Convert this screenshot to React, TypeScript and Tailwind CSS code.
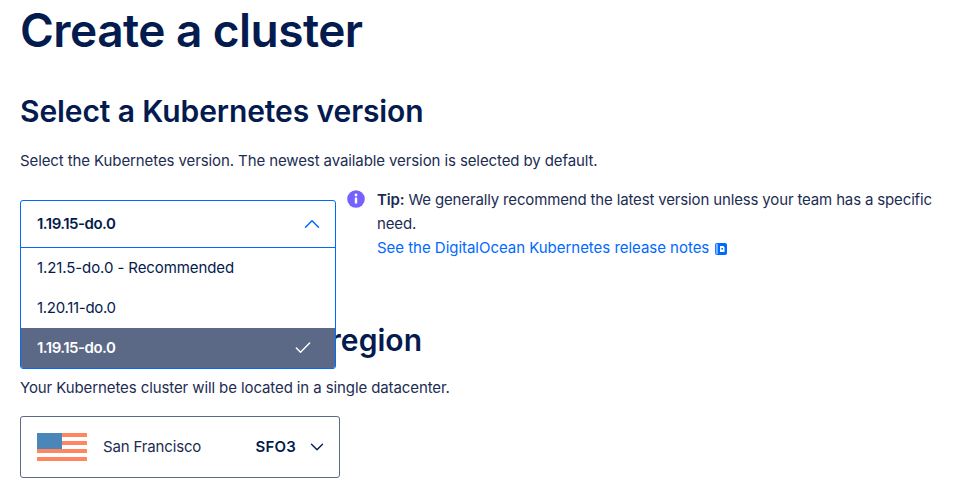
import { ChevronDown, ChevronUp, Check } from "lucide-react";

const font = "font-['Inter',sans-serif]";

function UsFlag() {
  return (
    <svg width="50" height="28" viewBox="0 0 50 28" className="shrink-0">
      <rect width="50" height="28" fill="#fff" />
      <rect y="0" width="50" height="4" fill="#ff8661" />
      <rect y="8" width="50" height="4" fill="#ff8661" />
      <rect y="16" width="50" height="4" fill="#ff8661" />
      <rect y="24" width="50" height="4" fill="#ff8661" />
      <rect width="25" height="16" fill="#4a86b8" />
    </svg>
  );
}

export default function App() {
  return (
    <div className={`${font} h-[502px] w-[953px] overflow-hidden bg-white pl-5 text-[#031b4e]`}>
      <h1 className="h-[60px] text-[46px] leading-[60px] font-semibold tracking-[-0.55px]">Create a cluster</h1>

      <h2 className="mt-[34px] text-[30px] leading-[34px] font-semibold tracking-[-0.1px]">Select a Kubernetes version</h2>
      <p className="mt-[23px] text-[15px] leading-[20px] tracking-[-0.1px] text-[#1c2c52]">
        Select the Kubernetes version. The newest available version is selected by default.
      </p>

      <div className="mt-[29px] flex items-start">
        <div className="relative h-[48px] w-[316px] shrink-0">
          <div className="absolute top-0 left-0 z-10 w-[316px] overflow-hidden rounded-[3px] border border-[#0069ff] bg-white text-[15px]">
            <div className="flex h-[47px] items-center justify-between border-b border-[#0069ff] pr-[10px] pl-4">
              <span className="font-semibold tracking-[-0.5px]">1.19.15-do.0</span>
              <ChevronUp className="h-[26px] w-[26px] text-[#0069ff]" strokeWidth={1.35} />
            </div>
            <div className="flex h-[40px] items-center pl-4 tracking-[-0.1px]">1.21.5-do.0 - Recommended</div>
            <div className="flex h-[40px] items-center pl-4 tracking-[-0.3px]">1.20.11-do.0</div>
            <div className="flex h-[40px] items-center justify-between bg-[#5b6987] pr-[22px] pl-4 font-semibold tracking-[-0.5px] text-white">
              <span>1.19.15-do.0</span>
              <Check className="h-[20px] w-[20px]" strokeWidth={1.75} />
            </div>
          </div>
        </div>

        <div className="ml-[11px] flex w-[590px] gap-[12px] text-[15px] leading-[24px] tracking-[-0.15px] text-[#1c2c52]">
          <svg width="18" height="18" viewBox="0 0 18 18" className="mt-[-10px] shrink-0">
            <circle cx="9" cy="9" r="8.8" fill="#7461ff" />
            <rect x="7.8" y="7.6" width="2.4" height="6" rx="0.4" fill="#fff" />
            <circle cx="9" cy="5" r="1.4" fill="#fff" />
          </svg>
          <div className="mt-[-12px]">
            <p>
              <b className="font-semibold">Tip:</b> We generally recommend the latest version unless your team has a specific need.
            </p>
            <a className="flex items-center gap-[6px] tracking-[-0.03px] text-[#0069ff]">
              See the DigitalOcean Kubernetes release notes
              <svg width="12" height="12" viewBox="0 0 12 12" className="mt-[2px]">
                <rect width="12" height="12" rx="2" fill="#0069ff" />
                <rect x="0.8" y="0.8" width="2" height="10.4" fill="#8ab8ff" />
                <path d="M5 3h3.5l1 1.4V9H5z" fill="#fff" />
                <rect x="6.4" y="5" width="1.6" height="1.6" fill="#0069ff" />
              </svg>
            </a>
          </div>
        </div>
      </div>

      <h2 className="mt-[63px] text-[30px] leading-[34px] font-semibold tracking-[0.05px]">Choose a datacenter region</h2>
      <p className="mt-[21px] text-[15px] leading-[20px] tracking-[-0.1px] text-[#1c2c52]">
        Your Kubernetes cluster will be located in a single datacenter.
      </p>

      <div className="mt-[18px] flex h-[62px] w-[320px] items-center rounded-[3px] border border-[#5b6987] pr-[11px] pl-4 text-[15px]">
        <UsFlag />
        <span className="ml-4 tracking-[-0.15px] text-[#1c2c52]">San Francisco</span>
        <span className="ml-auto font-semibold tracking-[0.2px]">SFO3</span>
        <ChevronDown className="ml-[10px] h-[22px] w-[22px]" strokeWidth={1.5} />
      </div>
    </div>
  );
}
